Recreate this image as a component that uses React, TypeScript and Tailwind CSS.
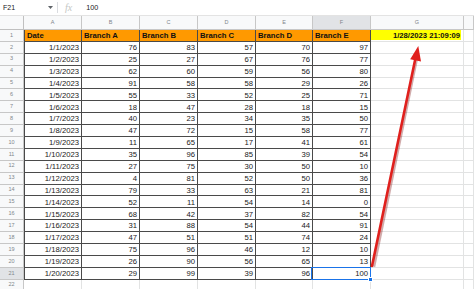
import React from 'react';

const GRID = 'grid grid-cols-[24px_58px_58px_58px_58px_57px_58px_93px_10px]';

const headers = ['Date', 'Branch A', 'Branch B', 'Branch C', 'Branch D', 'Branch E'];

const data: (string | number)[][] = [
  ['1/1/2023', 76, 83, 57, 70, 97],
  ['1/2/2023', 25, 27, 67, 76, 77],
  ['1/3/2023', 62, 60, 59, 56, 80],
  ['1/4/2023', 91, 58, 58, 29, 26],
  ['1/5/2023', 55, 33, 52, 25, 71],
  ['1/6/2023', 18, 47, 28, 18, 15],
  ['1/7/2023', 40, 23, 34, 35, 50],
  ['1/8/2023', 47, 72, 15, 58, 77],
  ['1/9/2023', 11, 65, 17, 41, 61],
  ['1/10/2023', 35, 96, 85, 39, 54],
  ['1/11/2023', 27, 75, 30, 50, 10],
  ['1/12/2023', 4, 81, 52, 50, 36],
  ['1/13/2023', 79, 33, 63, 21, 81],
  ['1/14/2023', 52, 11, 54, 14, 0],
  ['1/15/2023', 68, 42, 37, 82, 54],
  ['1/16/2023', 31, 88, 54, 44, 91],
  ['1/17/2023', 47, 51, 51, 74, 24],
  ['1/18/2023', 75, 96, 46, 12, 10],
  ['1/19/2023', 26, 90, 56, 65, 13],
  ['1/20/2023', 29, 99, 39, 96, 100],
];

function RowHead({ n, active }: { n: number; active?: boolean }) {
  return (
    <div
      className={`flex items-center justify-center border-r border-b border-[#c7c7c7] text-[5.5px] leading-none text-[#80868b] ${
        active ? 'bg-[#e1e3e6]' : 'bg-[#f8f9fa]'
      }`}
    >
      {n}
    </div>
  );
}

function Blank() {
  return <div className="border-r border-b border-[#e2e3e3]" />;
}

function DataCell({ value, first, selected }: { value: string | number; first?: boolean; selected?: boolean }) {
  return (
    <div
      className={`relative flex items-end justify-end border-r border-b border-[#4a4a4a] pr-[2px] pb-[1px] text-[7.7px] leading-none text-[#1a1a1a] ${
        first ? 'border-l' : ''
      }`}
    >
      {value}
      {selected && (
        <>
          <div className="absolute left-[-2px] top-[-1px] right-[-1px] bottom-[-1px] border-[1.5px] border-[#1a73e8]" />
          <div className="absolute right-[-3px] bottom-[-3px] h-[5px] w-[5px] border border-white bg-[#1a73e8]" />
        </>
      )}
    </div>
  );
}

export default function App() {
  return (
    <div className="relative h-[289px] w-[474px] overflow-hidden bg-white font-['Liberation_Sans',Arial,sans-serif] text-[#202124]">
      {/* name box + formula bar */}
      <div className="flex h-[16px] items-center border-b border-[#e3e3e3]">
        <div className="flex w-[57px] items-center justify-between pl-[3px] pr-[4px]">
          <span className="text-[7px] leading-none">F21</span>
          <svg width="5" height="3" viewBox="0 0 5 3">
            <path d="M0 0h5L2.5 3z" fill="#5f6368" />
          </svg>
        </div>
        <div className="h-[11px] w-px bg-[#dadce0]" />
        <span className="ml-[7px] font-['Liberation_Serif',serif] text-[10px] italic leading-none text-[#c4c7c5]">fx</span>
        <span className="ml-[14px] text-[7.2px] leading-none">100</span>
      </div>

      {/* column letters */}
      <div className={`${GRID} h-[14px]`}>
        <div className="border-r border-b border-[#c0c0c0] bg-[#f8f9fa]" />
        {['A', 'B', 'C', 'D', 'E', 'F', 'G', ''].map((c, i) => (
          <div
            key={i}
            className={`flex items-center justify-center border-r border-b border-[#c7c7c7] text-[5.5px] leading-none text-[#80868b] ${
              c === 'F' ? 'bg-[#e1e3e6]' : 'bg-[#f8f9fa]'
            }`}
          >
            {c}
          </div>
        ))}
      </div>

      {/* sheet body */}
      <div className={`${GRID} auto-rows-[11.9px]`}>
        <RowHead n={1} />
        {headers.map((h, i) => (
          <div
            key={h}
            className={`flex items-end border-r border-b border-[#4a4a4a] bg-[#ff9900] pl-[2px] pb-[1px] text-[7.7px] font-bold leading-none text-[#111] ${
              i === 0 ? 'border-l' : ''
            }`}
          >
            {h}
          </div>
        ))}
        <div className="flex items-end justify-end border-r border-b border-[#e2e3e3] pr-[2px] pb-[1px]">
          <div className="flex h-full w-[91px] items-end justify-end bg-[#ffff00] pr-[1px] text-[7.7px] font-bold leading-none text-[#111]">
            1/28/2023 21:09:09
          </div>
        </div>
        <Blank />

        {data.map((row, r) => (
          <React.Fragment key={r}>
            <RowHead n={r + 2} active={r === 19} />
            {row.map((v, c) => (
              <DataCell key={c} value={v} first={c === 0} selected={r === 19 && c === 5} />
            ))}
            <Blank />
            <Blank />
          </React.Fragment>
        ))}

        <RowHead n={22} />
        {Array.from({ length: 8 }).map((_, i) => (
          <Blank key={i} />
        ))}
      </div>

      {/* red arrow annotation */}
      <svg className="pointer-events-none absolute left-0 top-0" width="474" height="289" viewBox="0 0 474 289">
        <line x1="373" y1="266" x2="415.6" y2="59" stroke="#7a0d0d" strokeOpacity="0.35" strokeWidth="3" transform="translate(0.8 0.8)" />
        <line x1="372" y1="266" x2="415.3" y2="59" stroke="#e0201d" strokeWidth="2.6" strokeLinecap="round" />
        <polygon points="418.3,46 421,61.5 410.2,59.3" fill="#e0201d" />
      </svg>
    </div>
  );
}
